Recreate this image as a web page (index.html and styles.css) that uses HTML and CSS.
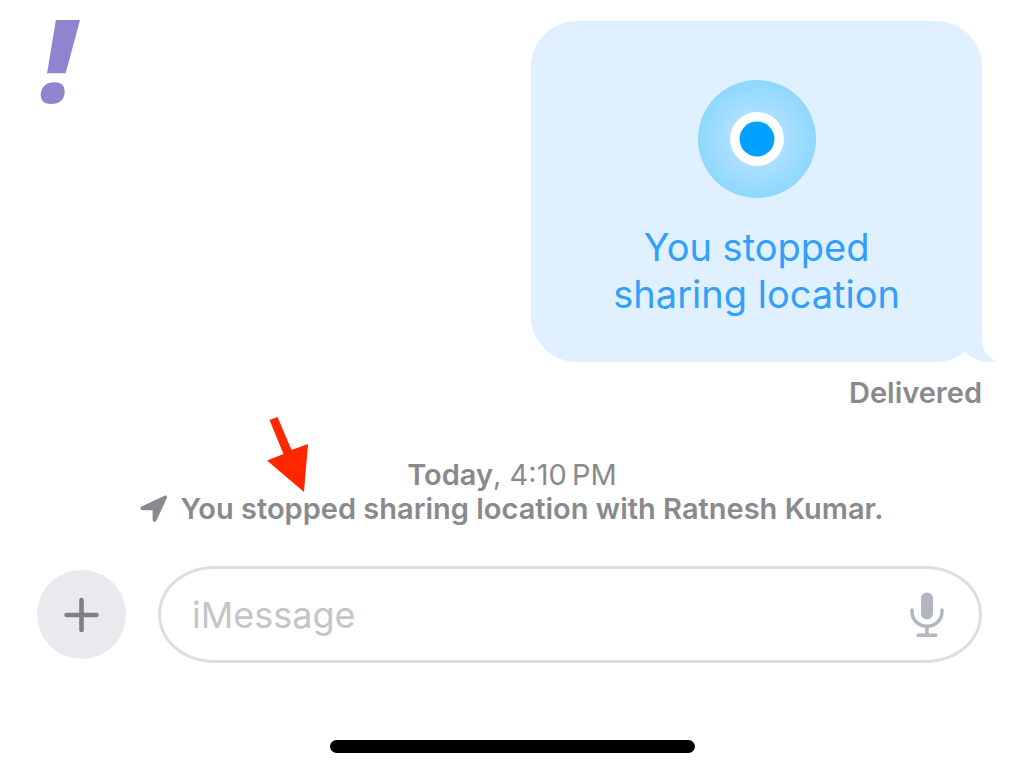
FILE: index.html
```
<!DOCTYPE html>
<html lang="en">
<head>
    <meta charset="UTF-8">
    <meta name="viewport" content="width=device-width, initial-scale=1">
    <title>Messages</title>
    <link rel="stylesheet" href="styles.css">
</head>
<body>
    <main class="chat">
        <div class="top-row">
            <div class="brand">!</div>
            <div class="message">
                <div class="bubble">
                    <svg class="location-icon" viewBox="0 0 118 118" aria-hidden="true">
                        <defs>
                            <radialGradient id="halo">
                                <stop offset="0.4" stop-color="#b0e0ff"/>
                                <stop offset="1" stop-color="#8dd8fd"/>
                            </radialGradient>
                        </defs>
                        <circle cx="59" cy="59" r="59" fill="url(#halo)"/>
                        <circle cx="59" cy="59" r="27" fill="#fff"/>
                        <circle cx="59" cy="59" r="17.5" fill="#00a1ff"/>
                    </svg>
                    <p class="bubble-text">You stopped<br>sharing location</p>
                    <svg class="tail" viewBox="0 0 60 60" aria-hidden="true">
                        <path d="M46 0V36C46 48 52 56 60 59C49 62 38 58 29 50L10 30V0Z" fill="#e0f0fe"/>
                    </svg>
                </div>
                <p class="status">Delivered</p>
            </div>
        </div>

        <div class="notice">
            <p class="time"><b>Today</b>, 4:10&#8239;PM</p>
            <p class="event">
                <svg class="nav-icon" viewBox="0 0 28 28" aria-hidden="true">
                    <path d="M1.500 11.500L24.500 .7Q27.800 -.2 26.800 3L16.500 25.500Q14.200 28.500 12.600 25V15.300H2.500Q-1.200 14 1.500 11.500Z" fill="#8a8a8e"/>
                </svg>
                <span>You stopped sharing location with Ratnesh Kumar.</span>
                <svg class="pointer" viewBox="0 0 42 76" aria-hidden="true">
                    <path d="M2.500 4L10.500 1L24.500 34L41 28L37 76L0 44.500L16.500 38Z" fill="#ff2600"/>
                </svg>
            </p>
        </div>

        <form class="composer">
            <button type="button" class="add-btn" aria-label="Add">
                <svg viewBox="0 0 36 36" width="36" height="36">
                    <path d="M17.500 3V33M2.500 18H32.500" stroke="#7f7f86" stroke-width="4.600" stroke-linecap="round"/>
                </svg>
            </button>
            <div class="field">
                <input type="text" placeholder="iMessage" aria-label="iMessage">
                <button type="button" class="mic-btn" aria-label="Dictate">
                    <svg viewBox="0 0 34 46" width="34" height="46" fill="none" stroke="#b2b7bf" stroke-linecap="round">
                        <rect x="11" y="0.500" width="12" height="27" rx="6" fill="#b2b7bf" stroke="none"/>
                        <path d="M2 18V19.500C2 28 8.500 34.300 17 34.300S32 28 32 19.500V18M17 34.500V43M8 43.200H26" stroke-width="3.500"/>
                    </svg>
                </button>
            </div>
        </form>

        <div class="home-bar"></div>
    </main>
</body>
</html>
```
FILE: styles.css
```
* {
    box-sizing: border-box;
}

body {
    margin: 0;
    background: #fff;
    color: #8a8a8e;
    font-family: Inter, "Liberation Sans", sans-serif;
    font-size: 29px;
    line-height: 34px;
}

p {
    margin: 0;
}

button {
    display: flex;
    align-items: center;
    justify-content: center;
    padding: 0;
    border: none;
    background: none;
    cursor: pointer;
}

.chat {
    display: flex;
    flex-direction: column;
    padding-bottom: 21px;
}

.top-row {
    display: flex;
    justify-content: space-between;
    align-items: flex-start;
    padding: 0 42px 0 40px;
}

.brand {
    color: #9283cf;
    font-family: "Noto Sans", "Open Sans", sans-serif;
    font-size: 116px;
    font-style: italic;
    font-weight: 900;
    line-height: 116px;
}

/* Outgoing message */
.message {
    margin-top: 21px;
    text-align: right;
}

.bubble {
    position: relative;
    display: flex;
    flex-direction: column;
    align-items: center;
    gap: 26px;
    padding: 59px 82px 44px;
    border-radius: 46px;
    background: #e0f0fe;
}

.location-icon {
    width: 118px;
    height: 118px;
}

.bubble-text {
    color: #329ffb;
    font-size: 38px;
    line-height: 47px;
    text-align: center;
}

.tail {
    position: absolute;
    right: -14px;
    bottom: 0;
    width: 60px;
    height: 60px;
}

.status {
    margin-top: 14px;
    font-weight: 600;
}

/* Conversation notice */
.notice {
    margin-top: 48px;
    text-align: center;
}

.time b {
    font-weight: 600;
}

.event {
    position: relative;
    display: flex;
    align-items: center;
    justify-content: center;
    gap: 12px;
    width: fit-content;
    margin: 0 auto;
    font-weight: 600;
}

.nav-icon {
    width: 28px;
    height: 28px;
}

.pointer {
    position: absolute;
    left: 127px;
    bottom: 34px;
    width: 42px;
    height: 76px;
}

/* Message input */
.composer {
    display: flex;
    align-items: center;
    gap: 32px;
    margin-top: 40px;
    padding: 0 42px 0 37px;
}

.add-btn {
    flex: none;
    width: 89px;
    height: 89px;
    border-radius: 50%;
    background: #e9e9ee;
}

.field {
    display: flex;
    flex: 1;
    align-items: center;
    height: 97px;
    padding: 0 35px 0 31px;
    border: 3px solid #dedede;
    border-radius: 56px / 48px;
}

.field input {
    flex: 1;
    min-width: 0;
    padding: 0;
    border: none;
    outline: none;
    background: none;
    color: #000;
    font: inherit;
    font-size: 36px;
    line-height: 44px;
}

.field input::placeholder {
    color: #c5c5c7;
    opacity: 1;
}

.home-bar {
    align-self: center;
    width: 365px;
    max-width: 80%;
    height: 13px;
    margin-top: 77px;
    border-radius: 7px;
    background: #000;
}
```
